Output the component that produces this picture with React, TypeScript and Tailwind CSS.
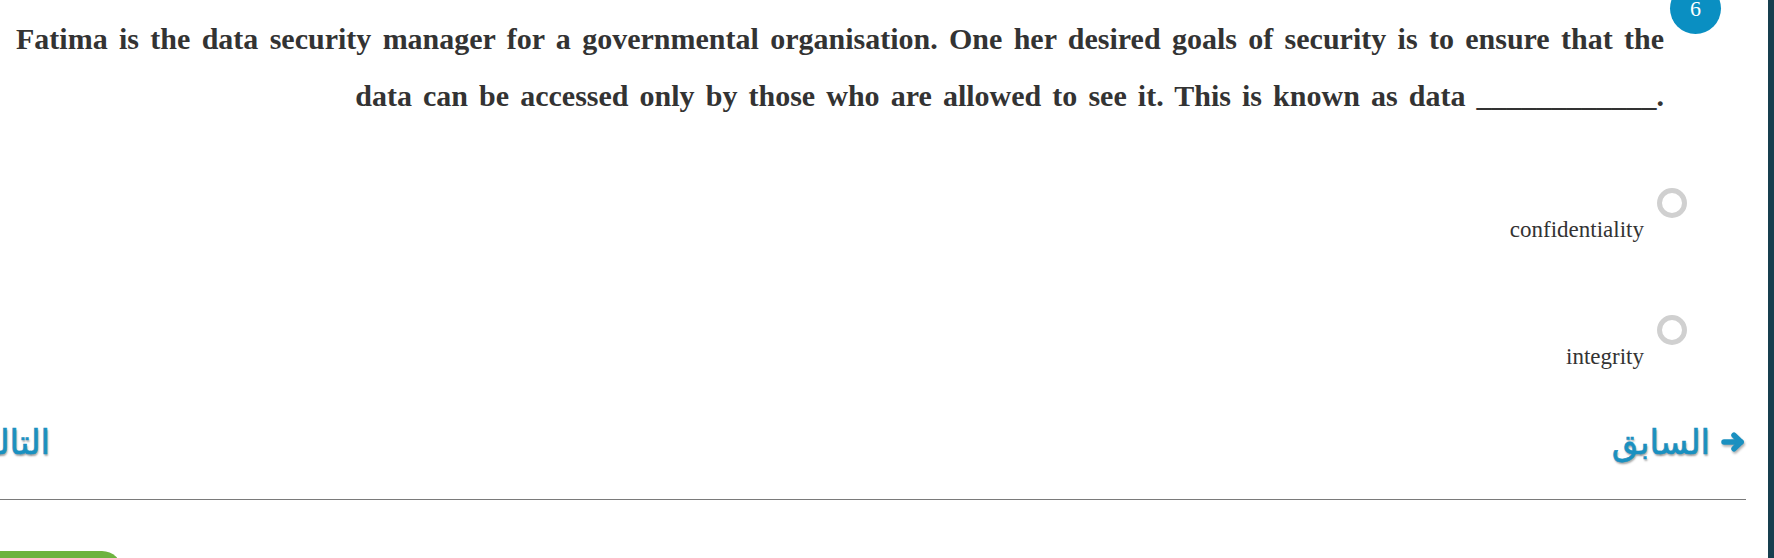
import React from "react";

function Arrow({ left = false }: { left?: boolean }) {
  return (
    <svg
      viewBox="0 0 24 20"
      className={left ? "h-[20px] w-[24px] shrink-0 -scale-x-100 drop-shadow-[1px_2px_1px_rgba(0,0,0,0.3)]" : "h-[20px] w-[24px] shrink-0 drop-shadow-[1px_2px_1px_rgba(0,0,0,0.3)]"}
      fill="none"
      stroke="#1a90c0"
      strokeWidth={5.5}
      strokeLinecap="round"
      strokeLinejoin="round"
    >
      <path d="M3 10H20" />
      <path d="M13 3.2L20 10L13 16.8" />
    </svg>
  );
}

export default function App() {
  return (
    <div className="flex h-[558px] w-[1774px] overflow-hidden bg-white">
      <div className="relative flex min-w-0 flex-1 flex-col">
        <div className="relative shrink-0 pl-4 pr-[104px] pt-[10px]">
          <p className="font-['Liberation_Serif','Times_New_Roman',serif] text-[30px] font-bold leading-[57px] text-[#333] text-justify [text-align-last:right] [word-spacing:3.6px]">
            Fatima is the data security manager for a governmental organisation. One her desired goals of security is to ensure that the data can be accessed only by those who are allowed to see it. This is known as data ____________.
          </p>
          <span className="absolute left-[1670px] top-[-17px] flex h-[51px] w-[51px] items-center justify-center rounded-full bg-[#0a8fc2] font-['Liberation_Serif',serif] text-[22px] leading-none text-white">
            6
          </span>
        </div>

        <div className="mt-[64px] flex shrink-0 flex-col items-end pr-[81px]">
          <div className="h-[30px] w-[30px] shrink-0 rounded-full border-[5px] border-[#d0d0d0]" />
          <div className="mr-[43px] font-['Liberation_Serif',serif] text-[23px] leading-[24px] text-[#333]">
            confidentiality
          </div>
          <div className="mt-[73px] h-[30px] w-[30px] shrink-0 rounded-full border-[5px] border-[#d0d0d0]" />
          <div className="mr-[43px] font-['Liberation_Serif',serif] text-[23px] leading-[24px] text-[#333]">
            integrity
          </div>
        </div>

        <div className="mt-[53px] flex h-[40px] shrink-0 items-center justify-between">
          <div className="flex w-[50px] justify-end">
            <span className="flex shrink-0 items-center gap-[12px] whitespace-nowrap text-[#1a90c0] [text-shadow:1px_2px_2px_rgba(0,0,0,0.35)]">
              <Arrow left />
              <span dir="rtl" className="font-['DejaVu_Sans',sans-serif] text-[34px] leading-[40px] [-webkit-text-stroke:0.6px_#1a90c0]">
                التالي
              </span>
            </span>
          </div>
          <div className="mr-[23px] flex items-center gap-[11px] text-[#1a90c0] [text-shadow:1px_2px_2px_rgba(0,0,0,0.35)]">
            <span dir="rtl" className="font-['DejaVu_Sans',sans-serif] text-[34px] leading-[40px] [-webkit-text-stroke:0.6px_#1a90c0]">
              السابق
            </span>
            <Arrow />
          </div>
        </div>

        <div className="mr-[22px] mt-[37px] h-px shrink-0 bg-[#7a7a7a]" />

        <div className="ml-[-28px] mt-[51px] h-[40px] w-[150px] shrink-0 rounded-[22px] bg-[#6db33f]" />
      </div>
      <div className="w-[6px] shrink-0 bg-[#173f4f]" />
    </div>
  );
}
